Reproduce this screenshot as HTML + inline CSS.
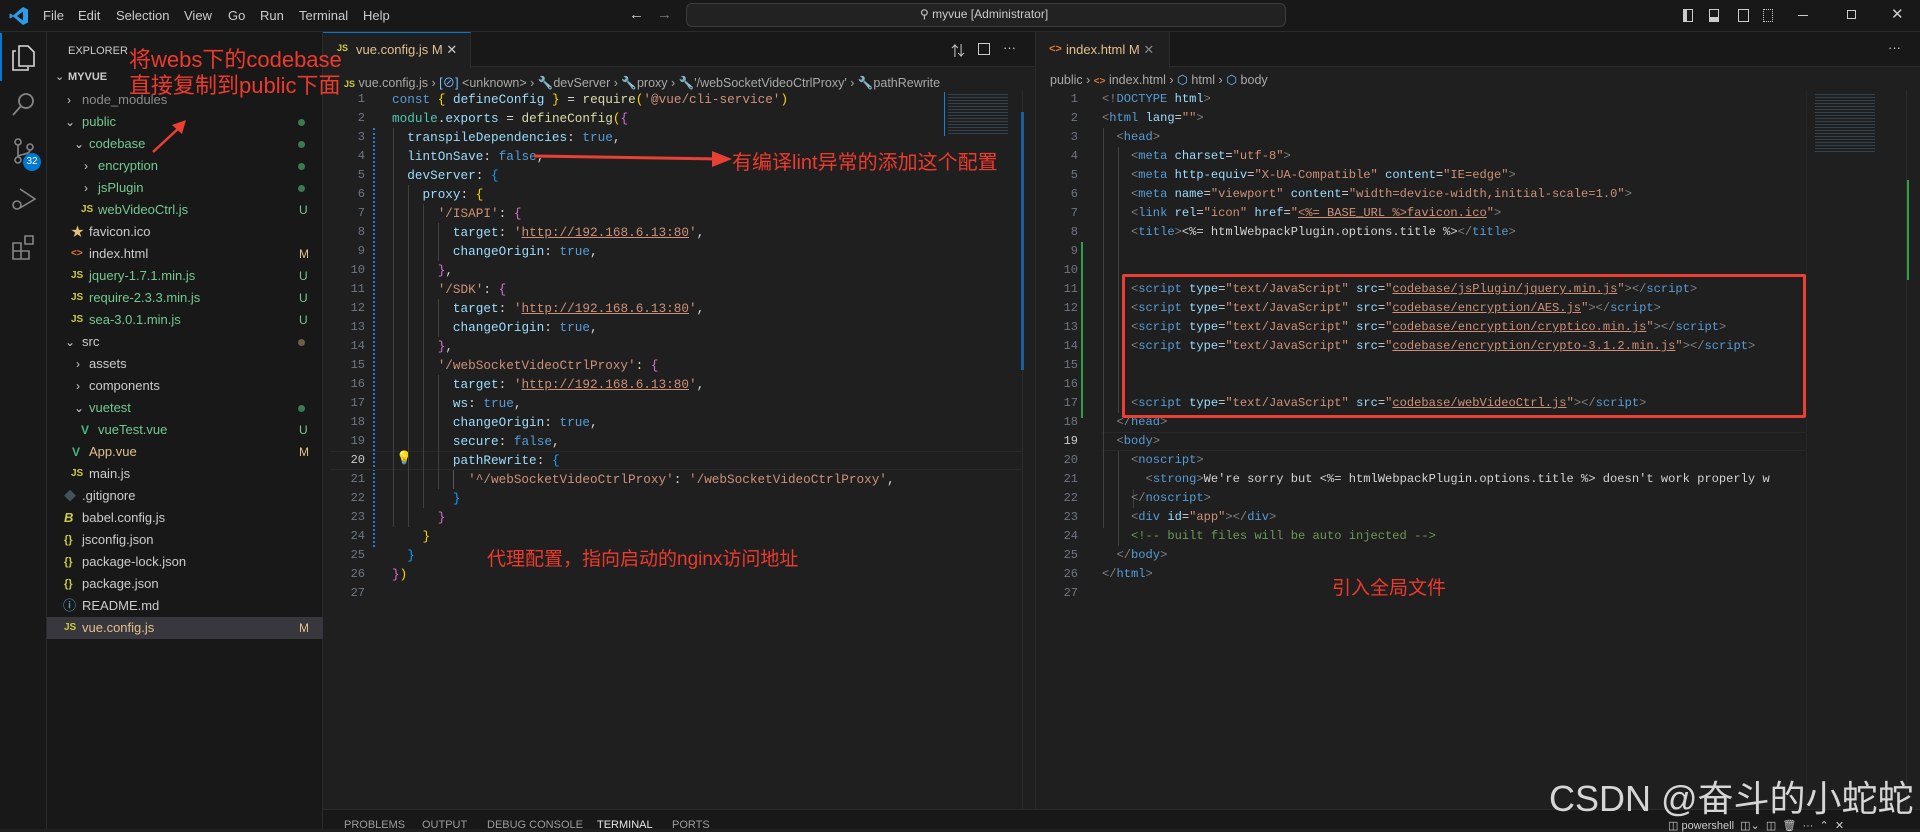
<!DOCTYPE html>
<html><head><meta charset="utf-8"><style>
*{margin:0;padding:0;box-sizing:border-box}
body{width:1920px;height:829px;overflow:hidden;background:#1f1f1f;font-family:"Liberation Sans","Noto Sans CJK SC",sans-serif;color:#ccc;position:relative}
.a{position:absolute;white-space:pre}
#title{left:0;top:0;width:1920px;height:32px;background:#181818;border-bottom:1px solid #2b2b2b}
#act{left:0;top:32px;width:47px;height:797px;background:#181818;border-right:1px solid #2b2b2b}
#side{left:47px;top:32px;width:276px;height:797px;background:#181818;border-right:1px solid #2b2b2b}
.menu{font-size:13px;color:#ccc;top:8px}
.row{position:absolute;left:47px;width:276px;height:22px;font-size:13px;line-height:22px}
.row .t{position:absolute;top:0;white-space:pre}
.row .b{position:absolute;left:252px;top:0;font-size:12px}
.dot{position:absolute;left:251px;top:8px;width:7px;height:7px;border-radius:50%;background:#3c7a52}
.g{color:#73c991}.y{color:#e2c08d}.w{color:#cccccc}.gr{color:#8c8c8c}
.chev{position:absolute;top:0;color:#ccc;font-size:12px}
.ic{position:absolute;top:0;font-size:10px;font-weight:bold}
.code{font-family:"Liberation Mono",monospace;line-height:19px;position:absolute;white-space:pre}
.L{font-size:12.7px;left:392px;top:90px}
.R{font-size:12.1px;left:1102px;top:90px}
.ln{position:absolute;font-family:"Liberation Mono",monospace;font-size:12px;line-height:19px;color:#6e7681;text-align:right;width:40px}
.k{color:#569cd6}.v{color:#9cdcfe}.f{color:#dcdcaa}.s{color:#ce9178}.t1{color:#ffd700}.t2{color:#da70d6}.t3{color:#179fff}.p{color:#d4d4d4}.gy{color:#808080}.tl{color:#4ec9b0}.c{color:#6a9955}
.u{text-decoration:underline;text-decoration-color:#ce9178}
.red{color:#ee3a2c;position:absolute;white-space:pre;font-family:"Liberation Sans","Noto Sans CJK SC",sans-serif}
.bc{font-size:12.5px;color:#a9a9a9;top:72px}
</style></head><body>
<div class="a" id="title"></div>
<svg class="a" style="left:9px;top:6px" width="20" height="20" viewBox="0 0 20 20"><path d="M14 1 L19 3.5 V16.5 L14 19 L4 10.5 L1.5 12.5 L0.5 12 V8 L1.5 7.5 L4 9.5 Z M14 5.5 L8 10 L14 14.5 Z" fill="#2c9ce8"/></svg>
<div class="a menu" style="left:43px">File</div><div class="a menu" style="left:78px">Edit</div><div class="a menu" style="left:116px">Selection</div><div class="a menu" style="left:184px">View</div><div class="a menu" style="left:228px">Go</div><div class="a menu" style="left:260px">Run</div><div class="a menu" style="left:299px">Terminal</div><div class="a menu" style="left:363px">Help</div>
<div class="a" style="left:629px;top:6px;color:#ccc;font-size:15px">←</div><div class="a" style="left:657px;top:6px;color:#777;font-size:15px">→</div>
<div class="a" style="left:686px;top:3px;width:600px;height:24px;border:1px solid #3c3c3c;border-radius:6px;background:#222"></div>
<div class="a" style="left:920px;top:7px;font-size:12px;color:#ccc">⚲ myvue [Administrator]</div>
<div class="a" style="left:1683px;top:9px;width:10px;height:13px;border:1px solid #ccc;border-left:4px solid #ccc"></div>
<div class="a" style="left:1709px;top:9px;width:10px;height:13px;border:1px solid #ccc;border-bottom:5px solid #ccc"></div>
<div class="a" style="left:1738px;top:9px;width:11px;height:13px;border:1px solid #ccc"></div>
<div class="a" style="left:1763px;top:9px;width:10px;height:13px;border:1px dotted #ccc"></div>
<div class="a" style="left:1798px;top:15px;width:10px;height:1px;background:#ccc"></div>
<div class="a" style="left:1847px;top:10px;width:9px;height:9px;border:1px solid #ccc"></div>
<div class="a" style="left:1891px;top:5px;font-size:15px;color:#ccc">✕</div>

<div class="a" id="act"></div>
<div class="a" style="left:0;top:33px;width:2px;height:48px;background:#0078d4"></div>
<svg class="a" style="left:11px;top:44px" width="26" height="28" viewBox="0 0 26 28" fill="none" stroke="#d7d7d7" stroke-width="1.6"><path d="M8 2h9l6 6v14H8z M5 7H2v19h15v-3"/></svg>
<svg class="a" style="left:11px;top:91px" width="26" height="26" viewBox="0 0 26 26" fill="none" stroke="#858585" stroke-width="1.8"><circle cx="15" cy="10" r="7"/><path d="M10 15 L2 24"/></svg>
<svg class="a" style="left:12px;top:138px" width="24" height="26" viewBox="0 0 24 26" fill="none" stroke="#858585" stroke-width="1.6"><circle cx="6" cy="4" r="3"/><circle cx="6" cy="22" r="3"/><circle cx="18" cy="9" r="3"/><path d="M6 7v12 M18 12c0 5-12 4-12 7"/></svg>
<div class="a" style="left:23px;top:153px;width:18px;height:18px;border-radius:9px;background:#0078d4;color:#fff;font-size:10px;text-align:center;line-height:18px">32</div>
<svg class="a" style="left:11px;top:186px" width="26" height="26" viewBox="0 0 26 26" fill="none" stroke="#858585" stroke-width="1.6"><path d="M9 3 L24 13 L9 22"/><circle cx="6" cy="19" r="4"/></svg>
<svg class="a" style="left:11px;top:234px" width="26" height="26" viewBox="0 0 26 26" fill="none" stroke="#858585" stroke-width="1.6"><path d="M2 9h8v8H2z M2 17h8v8H2z M10 17h8v8h-8z M14 2h8v8h-8z"/></svg>

<div class="a" id="side"></div>
<div class="a" style="left:68px;top:45px;font-size:11px;color:#ccc">EXPLORER</div>
<div class="a" style="left:55px;top:70px;font-size:11px;color:#ccc">⌄</div>
<div class="a" style="left:68px;top:71px;font-size:11px;font-weight:bold;color:#ccc">MYVUE</div>

<div class="row" style="top:89px"><span class="chev" style="left:20px">›</span><span class="t gr" style="left:35px">node_modules</span></div>
<div class="row" style="top:111px"><span class="chev" style="left:18px">⌄</span><span class="t g" style="left:35px">public</span><span class="dot"></span></div>
<div class="row" style="top:133px"><span class="chev" style="left:27px">⌄</span><span class="t g" style="left:42px">codebase</span><span class="dot"></span></div>
<div class="row" style="top:155px"><span class="chev" style="left:37px">›</span><span class="t g" style="left:51px">encryption</span><span class="dot"></span></div>
<div class="row" style="top:177px"><span class="chev" style="left:37px">›</span><span class="t g" style="left:51px">jsPlugin</span><span class="dot"></span></div>
<div class="row" style="top:199px"><span class="ic" style="left:34px;color:#cbcb41">JS</span><span class="t g" style="left:51px">webVideoCtrl.js</span><span class="b g">U</span></div>
<div class="row" style="top:221px"><span class="ic" style="left:24px;color:#e5c07b;font-size:13px">★</span><span class="t w" style="left:42px">favicon.ico</span></div>
<div class="row" style="top:243px"><span class="ic" style="left:24px;color:#e37933">&lt;&gt;</span><span class="t w" style="left:42px">index.html</span><span class="b y">M</span></div>
<div class="row" style="top:265px"><span class="ic" style="left:24px;color:#cbcb41">JS</span><span class="t g" style="left:42px">jquery-1.7.1.min.js</span><span class="b g">U</span></div>
<div class="row" style="top:287px"><span class="ic" style="left:24px;color:#cbcb41">JS</span><span class="t g" style="left:42px">require-2.3.3.min.js</span><span class="b g">U</span></div>
<div class="row" style="top:309px"><span class="ic" style="left:24px;color:#cbcb41">JS</span><span class="t g" style="left:42px">sea-3.0.1.min.js</span><span class="b g">U</span></div>
<div class="row" style="top:331px"><span class="chev" style="left:18px">⌄</span><span class="t w" style="left:35px">src</span><span class="dot" style="background:#6b6045"></span></div>
<div class="row" style="top:353px"><span class="chev" style="left:29px">›</span><span class="t w" style="left:42px">assets</span></div>
<div class="row" style="top:375px"><span class="chev" style="left:29px">›</span><span class="t w" style="left:42px">components</span></div>
<div class="row" style="top:397px"><span class="chev" style="left:27px">⌄</span><span class="t g" style="left:42px">vuetest</span><span class="dot"></span></div>
<div class="row" style="top:419px"><span class="ic" style="left:34px;color:#41b883;font-size:12px">V</span><span class="t g" style="left:51px">vueTest.vue</span><span class="b g">U</span></div>
<div class="row" style="top:441px"><span class="ic" style="left:25px;color:#41b883;font-size:12px">V</span><span class="t y" style="left:42px">App.vue</span><span class="b y">M</span></div>
<div class="row" style="top:463px"><span class="ic" style="left:24px;color:#cbcb41">JS</span><span class="t w" style="left:42px">main.js</span></div>
<div class="row" style="top:485px"><span class="ic" style="left:17px;color:#41535b;font-size:12px">◆</span><span class="t w" style="left:35px">.gitignore</span></div>
<div class="row" style="top:507px"><span class="ic" style="left:17px;color:#cbcb41;font-size:13px;font-style:italic">B</span><span class="t w" style="left:35px">babel.config.js</span></div>
<div class="row" style="top:529px"><span class="ic" style="left:17px;color:#cbcb41;font-size:11px">{}</span><span class="t w" style="left:35px">jsconfig.json</span></div>
<div class="row" style="top:551px"><span class="ic" style="left:17px;color:#cbcb41;font-size:11px">{}</span><span class="t w" style="left:35px">package-lock.json</span></div>
<div class="row" style="top:573px"><span class="ic" style="left:17px;color:#cbcb41;font-size:11px">{}</span><span class="t w" style="left:35px">package.json</span></div>
<div class="row" style="top:595px"><span class="ic" style="left:16px;color:#519aba;font-size:13px">ⓘ</span><span class="t w" style="left:35px">README.md</span></div>
<div class="row" style="top:617px;background:#37373d"><span class="ic" style="left:17px;color:#cbcb41">JS</span><span class="t y" style="left:35px">vue.config.js</span><span class="b y">M</span></div>

<!-- left editor tabs -->
<div class="a" style="left:323px;top:32px;width:712px;height:35px;background:#181818;border-bottom:1px solid #2b2b2b"></div>
<div class="a" style="left:323px;top:32px;width:148px;height:36px;background:#1f1f1f;border-top:1px solid #0078d4;border-right:1px solid #2b2b2b"></div>
<div class="a" style="left:337px;top:43px;font-size:9px;font-weight:bold;color:#cbcb41">JS</div>
<div class="a" style="left:356px;top:42px;font-size:13px;color:#e2c08d">vue.config.js <span style="color:#e2c08d">M</span> <span style="color:#ccc">✕</span></div>
<div class="a" style="left:951px;top:41px;font-size:14px;color:#ccc">⇅</div>
<div class="a" style="left:978px;top:43px;width:12px;height:12px;border:1px solid #ccc"></div>
<div class="a" style="left:1003px;top:40px;font-size:13px;color:#ccc">···</div>
<div class="a bc" style="left:344px"><span style="color:#cbcb41;font-size:9px;font-weight:bold">JS</span> vue.config.js › <span style="color:#75beff">[⊘]</span> &lt;unknown&gt; › 🔧devServer › 🔧proxy › 🔧'/webSocketVideoCtrlProxy' › 🔧pathRewrite</div>

<div class="a" style="left:373px;top:128px;width:2px;height:419px;border-left:2px dotted #1b81d6"></div>
<div class="a" style="left:330px;top:451px;width:693px;height:19px;border-top:1px solid #282828;border-bottom:1px solid #282828"></div>
<div class="a" style="left:396px;top:450px;font-size:13px;color:#ffcc00">💡</div>
<div class="ln" style="left:325px;top:90px">1<br>2<br>3<br>4<br>5<br>6<br>7<br>8<br>9<br>10<br>11<br>12<br>13<br>14<br>15<br>16<br>17<br>18<br>19<br><span style="color:#ccc">20</span><br>21<br>22<br>23<br>24<br>25<br>26<br>27</div>
<!-- indent guides -->
<div class="a" style="left:393px;top:128px;height:399px;border-left:1px solid #404040"></div>
<div class="a" style="left:408px;top:185px;height:342px;border-left:1px solid #404040"></div>
<div class="a" style="left:423px;top:204px;height:304px;border-left:1px solid #404040"></div>
<div class="a" style="left:438px;top:223px;height:38px;border-left:1px solid #404040"></div>
<div class="a" style="left:438px;top:299px;height:38px;border-left:1px solid #404040"></div>
<div class="a" style="left:438px;top:375px;height:114px;border-left:1px solid #404040"></div>
<div class="a" style="left:453px;top:470px;height:19px;border-left:1px solid #585858"></div>
<div class="code L"><span class="k">const</span> <span class="t1">{</span> <span class="v">defineConfig</span> <span class="t1">}</span> <span class="p">=</span> <span class="f">require</span><span class="t1">(</span><span class="s">'@vue/cli-service'</span><span class="t1">)</span>
<span class="tl">module</span><span class="p">.</span><span class="v">exports</span> <span class="p">=</span> <span class="f">defineConfig</span><span class="t1">(</span><span class="t2">{</span>
  <span class="v">transpileDependencies</span><span class="p">:</span> <span class="k">true</span><span class="p">,</span>
  <span class="v">lintOnSave</span><span class="p">:</span> <span class="k">false</span><span class="p">,</span>
  <span class="v">devServer</span><span class="p">:</span> <span class="t3">{</span>
    <span class="v">proxy</span><span class="p">:</span> <span class="t1">{</span>
      <span class="s">'/ISAPI'</span><span class="p">:</span> <span class="t2">{</span>
        <span class="v">target</span><span class="p">:</span> <span class="s">'<span class="u">http://192.168.6.13:80</span>'</span><span class="p">,</span>
        <span class="v">changeOrigin</span><span class="p">:</span> <span class="k">true</span><span class="p">,</span>
      <span class="t2">}</span><span class="p">,</span>
      <span class="s">'/SDK'</span><span class="p">:</span> <span class="t2">{</span>
        <span class="v">target</span><span class="p">:</span> <span class="s">'<span class="u">http://192.168.6.13:80</span>'</span><span class="p">,</span>
        <span class="v">changeOrigin</span><span class="p">:</span> <span class="k">true</span><span class="p">,</span>
      <span class="t2">}</span><span class="p">,</span>
      <span class="s">'/webSocketVideoCtrlProxy'</span><span class="p">:</span> <span class="t2">{</span>
        <span class="v">target</span><span class="p">:</span> <span class="s">'<span class="u">http://192.168.6.13:80</span>'</span><span class="p">,</span>
        <span class="v">ws</span><span class="p">:</span> <span class="k">true</span><span class="p">,</span>
        <span class="v">changeOrigin</span><span class="p">:</span> <span class="k">true</span><span class="p">,</span>
        <span class="v">secure</span><span class="p">:</span> <span class="k">false</span><span class="p">,</span>
        <span class="v">pathRewrite</span><span class="p">:</span> <span class="t3">{</span>
          <span class="s">'^/webSocketVideoCtrlProxy'</span><span class="p">:</span> <span class="s">'/webSocketVideoCtrlProxy'</span><span class="p">,</span>
        <span class="t3">}</span>
      <span class="t2">}</span>
    <span class="t1">}</span>
  <span class="t3">}</span>
<span class="t2">}</span><span class="t1">)</span></div>
<!-- left minimap / scrollbar -->
<div class="a" style="left:948px;top:92px;width:60px;height:44px;background:repeating-linear-gradient(#1f1f1f 0 2px,#3a4a5a 2px 3px);opacity:.8"></div>
<div class="a" style="left:944px;top:92px;width:1px;height:44px;background:#1b81d6"></div>
<div class="a" style="left:1022px;top:90px;width:1px;height:719px;background:#2b2b2b"></div>
<div class="a" style="left:1021px;top:112px;width:3px;height:258px;background:#1b5fa0"></div>

<!-- right editor -->
<div class="a" style="left:1035px;top:32px;width:885px;height:777px;border-left:1px solid #2b2b2b"></div>
<div class="a" style="left:1036px;top:32px;width:884px;height:35px;background:#181818;border-bottom:1px solid #2b2b2b"></div>
<div class="a" style="left:1036px;top:32px;width:134px;height:36px;background:#1f1f1f;border-right:1px solid #2b2b2b"></div>
<div class="a" style="left:1049px;top:43px;font-size:11px;color:#e37933;font-weight:bold">&lt;&gt;</div>
<div class="a" style="left:1066px;top:42px;font-size:13px;color:#e2c08d">index.html M <span style="color:#888">✕</span></div>
<div class="a" style="left:1888px;top:40px;font-size:13px;color:#ccc">···</div>
<div class="a bc" style="left:1050px">public › <span style="color:#e37933;font-weight:bold;font-size:10px">&lt;&gt;</span> index.html › <span style="color:#75beff">⬡</span> html › <span style="color:#75beff">⬡</span> body</div>
<div class="ln" style="left:1038px;top:90px">1<br>2<br>3<br>4<br>5<br>6<br>7<br>8<br>9<br>10<br>11<br>12<br>13<br>14<br>15<br>16<br>17<br>18<br><span style="color:#ccc">19</span><br>20<br>21<br>22<br>23<br>24<br>25<br>26<br>27</div>
<div class="a" style="left:1081px;top:242px;width:2px;height:176px;background:#2ea043"></div>
<div class="a" style="left:1102px;top:432px;width:704px;height:19px;border-top:1px solid #282828;border-bottom:1px solid #282828"></div>
<div class="a" style="left:1103px;top:128px;height:400px;border-left:1px solid #404040"></div>
<div class="a" style="left:1118px;top:147px;height:266px;border-left:1px solid #404040"></div>
<div class="a" style="left:1118px;top:451px;height:95px;border-left:1px solid #404040"></div>
<div class="a" style="left:1133px;top:489px;height:19px;border-left:1px solid #404040"></div>
<div class="code R"><span class="gy">&lt;!</span><span class="k">DOCTYPE</span> <span class="v">html</span><span class="gy">&gt;</span>
<span class="gy">&lt;</span><span class="k">html</span> <span class="v">lang</span><span class="p">=</span><span class="s">""</span><span class="gy">&gt;</span>
  <span class="gy">&lt;</span><span class="k">head</span><span class="gy">&gt;</span>
    <span class="gy">&lt;</span><span class="k">meta</span> <span class="v">charset</span><span class="p">=</span><span class="s">"utf-8"</span><span class="gy">&gt;</span>
    <span class="gy">&lt;</span><span class="k">meta</span> <span class="v">http-equiv</span><span class="p">=</span><span class="s">"X-UA-Compatible"</span> <span class="v">content</span><span class="p">=</span><span class="s">"IE=edge"</span><span class="gy">&gt;</span>
    <span class="gy">&lt;</span><span class="k">meta</span> <span class="v">name</span><span class="p">=</span><span class="s">"viewport"</span> <span class="v">content</span><span class="p">=</span><span class="s">"width=device-width,initial-scale=1.0"</span><span class="gy">&gt;</span>
    <span class="gy">&lt;</span><span class="k">link</span> <span class="v">rel</span><span class="p">=</span><span class="s">"icon"</span> <span class="v">href</span><span class="p">=</span><span class="s">"<span class="u">&lt;%= BASE_URL %&gt;favicon.ico</span>"</span><span class="gy">&gt;</span>
    <span class="gy">&lt;</span><span class="k">title</span><span class="gy">&gt;</span><span class="p">&lt;%= htmlWebpackPlugin.options.title %&gt;</span><span class="gy">&lt;/</span><span class="k">title</span><span class="gy">&gt;</span>


    <span class="gy">&lt;</span><span class="k">script</span> <span class="v">type</span><span class="p">=</span><span class="s">"text/JavaScript"</span> <span class="v">src</span><span class="p">=</span><span class="s">"<span class="u">codebase/jsPlugin/jquery.min.js</span>"</span><span class="gy">&gt;&lt;/</span><span class="k">script</span><span class="gy">&gt;</span>
    <span class="gy">&lt;</span><span class="k">script</span> <span class="v">type</span><span class="p">=</span><span class="s">"text/JavaScript"</span> <span class="v">src</span><span class="p">=</span><span class="s">"<span class="u">codebase/encryption/AES.js</span>"</span><span class="gy">&gt;&lt;/</span><span class="k">script</span><span class="gy">&gt;</span>
    <span class="gy">&lt;</span><span class="k">script</span> <span class="v">type</span><span class="p">=</span><span class="s">"text/JavaScript"</span> <span class="v">src</span><span class="p">=</span><span class="s">"<span class="u">codebase/encryption/cryptico.min.js</span>"</span><span class="gy">&gt;&lt;/</span><span class="k">script</span><span class="gy">&gt;</span>
    <span class="gy">&lt;</span><span class="k">script</span> <span class="v">type</span><span class="p">=</span><span class="s">"text/JavaScript"</span> <span class="v">src</span><span class="p">=</span><span class="s">"<span class="u">codebase/encryption/crypto-3.1.2.min.js</span>"</span><span class="gy">&gt;&lt;/</span><span class="k">script</span><span class="gy">&gt;</span>


    <span class="gy">&lt;</span><span class="k">script</span> <span class="v">type</span><span class="p">=</span><span class="s">"text/JavaScript"</span> <span class="v">src</span><span class="p">=</span><span class="s">"<span class="u">codebase/webVideoCtrl.js</span>"</span><span class="gy">&gt;&lt;/</span><span class="k">script</span><span class="gy">&gt;</span>
  <span class="gy">&lt;/</span><span class="k">head</span><span class="gy">&gt;</span>
  <span class="gy">&lt;</span><span class="k">body</span><span class="gy">&gt;</span>
    <span class="gy">&lt;</span><span class="k">noscript</span><span class="gy">&gt;</span>
      <span class="gy">&lt;</span><span class="k">strong</span><span class="gy">&gt;</span><span class="p">We're sorry but &lt;%= htmlWebpackPlugin.options.title %&gt; doesn't work properly w</span>
    <span class="gy">&lt;/</span><span class="k">noscript</span><span class="gy">&gt;</span>
    <span class="gy">&lt;</span><span class="k">div</span> <span class="v">id</span><span class="p">=</span><span class="s">"app"</span><span class="gy">&gt;&lt;/</span><span class="k">div</span><span class="gy">&gt;</span>
    <span class="c">&lt;!-- built files will be auto injected --&gt;</span>
  <span class="gy">&lt;/</span><span class="k">body</span><span class="gy">&gt;</span>
<span class="gy">&lt;/</span><span class="k">html</span><span class="gy">&gt;</span></div>
<div class="a" style="left:1806px;top:90px;width:114px;height:719px;background:#1f1f1f;border-left:1px solid #252525"></div>
<div class="a" style="left:1815px;top:92px;width:60px;height:60px;background:repeating-linear-gradient(#1f1f1f 0 2px,#3a4a5a 2px 3px);opacity:.8"></div>
<div class="a" style="left:1906px;top:180px;width:3px;height:100px;background:#2ea043"></div>
<div class="a" style="left:1906px;top:90px;width:1px;height:719px;background:#2b2b2b"></div>

<!-- red box -->
<div class="a" style="left:1122px;top:274px;width:684px;height:144px;border:3px solid #ea3f33;border-radius:2px"></div>

<!-- annotations -->
<div class="red" style="left:129px;top:42px;font-size:22px">将webs下的codebase</div>
<div class="red" style="left:129px;top:68px;font-size:22px">直接复制到public下面</div>
<svg class="a" style="left:150px;top:115px" width="40" height="40"><path d="M3 37 L30 12" stroke="#ea3f33" stroke-width="2.5"/><path d="M36 5 L22 10 L32 19 Z" fill="#ea3f33"/></svg>
<svg class="a" style="left:532px;top:148px" width="202" height="20"><path d="M2 8 L188 11" stroke="#ea3f33" stroke-width="3"/><path d="M200 11 L180 3 L180 19 Z" fill="#ea3f33"/></svg>
<div class="red" style="left:732px;top:146px;font-size:20px">有编译lint异常的添加这个配置</div>
<div class="red" style="left:487px;top:544px;font-size:19px">代理配置，指向启动的nginx访问地址</div>
<div class="red" style="left:1332px;top:573px;font-size:19px">引入全局文件</div>

<!-- bottom panel -->
<div class="a" style="left:323px;top:809px;width:1597px;height:20px;background:#181818;border-top:1px solid #2b2b2b"></div>
<div class="a" style="left:344px;top:819px;font-size:11px;color:#9d9d9d">PROBLEMS</div>
<div class="a" style="left:422px;top:819px;font-size:11px;color:#9d9d9d">OUTPUT</div>
<div class="a" style="left:487px;top:819px;font-size:11px;color:#9d9d9d">DEBUG CONSOLE</div>
<div class="a" style="left:597px;top:819px;font-size:11px;color:#e7e7e7">TERMINAL</div>
<div class="a" style="left:672px;top:819px;font-size:11px;color:#9d9d9d">PORTS</div>
<div class="a" style="left:1668px;top:819px;font-size:11px;color:#ccc">◫ powershell  ◫⌄  ◫  🗑  ···  ⌃  ✕</div>

<div class="a" style="left:1549px;top:770px;font-size:36px;color:#d6d6d6;font-family:'Liberation Sans','Noto Sans CJK SC',sans-serif">CSDN @奋斗的小蛇蛇</div>
</body></html>
